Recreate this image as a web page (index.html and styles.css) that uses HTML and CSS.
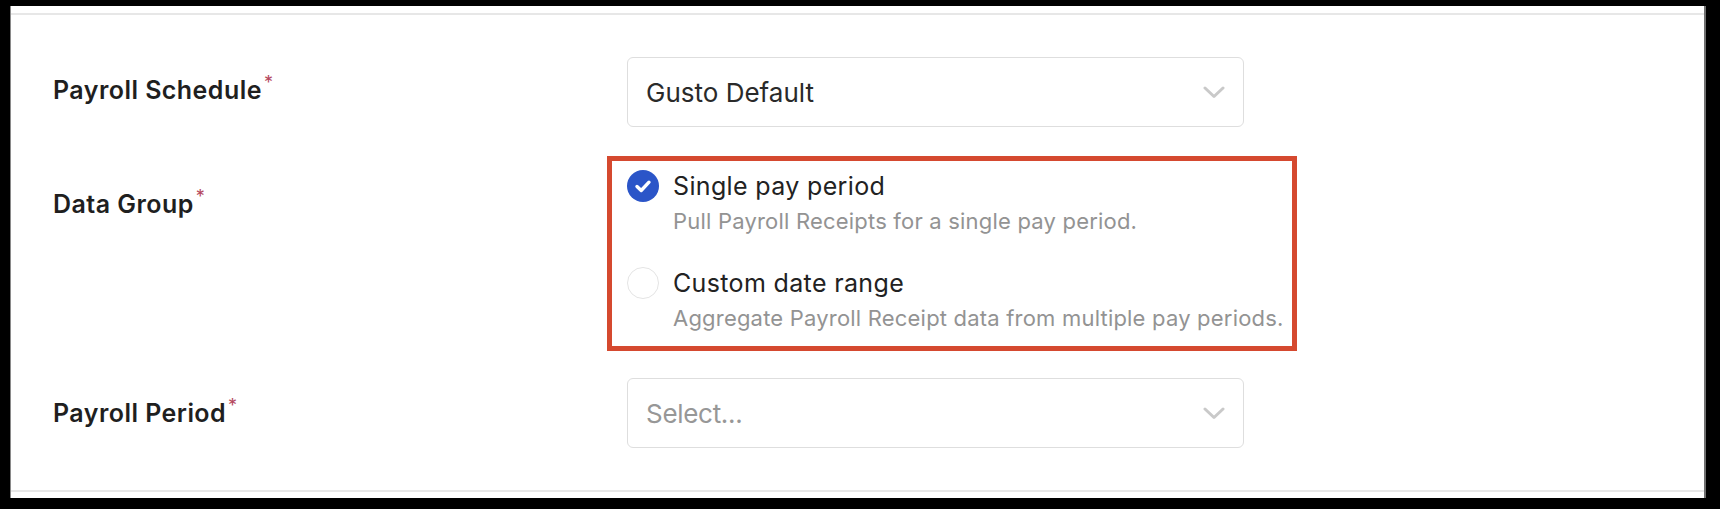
FILE: index.html
```html
<!DOCTYPE html>
<html lang="en">
<head>
<meta charset="utf-8">
<title>Payroll Receipts</title>
<link rel="stylesheet" href="styles.css">
</head>
<body>
<div class="panel">
  <div class="rule"></div>
  <form class="form">
    <div class="row row-center">
      <div class="label">Payroll Schedule<span class="req">*</span></div>
      <div class="control">
        <div class="select">
          <span class="select-value">Gusto Default</span>
          <svg class="chev" viewBox="0 0 22 13" width="22" height="13"><path d="M2 2 L11 10.5 L20 2" fill="none" stroke="#c9c9c9" stroke-width="3" stroke-linecap="round" stroke-linejoin="round"/></svg>
        </div>
      </div>
    </div>
    <div class="row row-top">
      <div class="label label-group">Data Group<span class="req">*</span></div>
      <div class="control">
        <div class="highlight">
          <div class="option">
            <svg class="radio" viewBox="0 0 32 32" width="32" height="32"><circle cx="16" cy="16" r="16" fill="#2b55c8"/><path d="M10 16.5 L14.2 20.5 L22 12.2" fill="none" stroke="#fff" stroke-width="3.4" stroke-linecap="round" stroke-linejoin="round"/></svg>
            <div class="option-text">
              <div class="option-title">Single pay period</div>
              <div class="option-desc">Pull Payroll Receipts for a single pay period.</div>
            </div>
          </div>
          <div class="option">
            <svg class="radio" viewBox="0 0 32 32" width="32" height="32"><circle cx="16" cy="16" r="15.5" fill="#fff" stroke="#e4e4e4" stroke-width="1"/></svg>
            <div class="option-text">
              <div class="option-title">Custom date range</div>
              <div class="option-desc">Aggregate Payroll Receipt data from multiple pay periods.</div>
            </div>
          </div>
        </div>
      </div>
    </div>
    <div class="row row-center">
      <div class="label label-last">Payroll Period<span class="req">*</span></div>
      <div class="control">
        <div class="select">
          <span class="select-placeholder">Select...</span>
          <svg class="chev" viewBox="0 0 22 13" width="22" height="13"><path d="M2 2 L11 10.5 L20 2" fill="none" stroke="#c9c9c9" stroke-width="3" stroke-linecap="round" stroke-linejoin="round"/></svg>
        </div>
      </div>
    </div>
  </form>
  <div class="rule"></div>
</div>
</body>
</html>
```
FILE: styles.css
```css
html, body {
  margin: 0;
  padding: 0;
  background: #000;
}
body {
  font-family: Inter, Lato, "Noto Sans", sans-serif;
  color: #222;
}
.panel {
  margin: 6px 14px 11px 10px;
  height: 492px;
  box-sizing: border-box;
  padding: 7px 0 6px;
  background: #fff;
  border-left: 1px solid #8a8a8a;
  border-right: 2px solid #6f6f6f;
  display: flex;
  flex-direction: column;
}
.rule {
  height: 2px;
  background: #e7e7e7;
}
.form {
  margin: 0;
  padding: 42px 0 42px 42px;
  display: flex;
  flex-direction: column;
  gap: 29px;
}
.form .row:last-child {
  margin-top: -2px;
}
.row {
  display: grid;
  grid-template-columns: 574px 1fr;
}
.row-center {
  align-items: center;
}
.row-top {
  align-items: start;
}
.label {
  font-size: 25px;
  font-weight: 600;
  line-height: 32px;
  letter-spacing: 0.45px;
  color: #1f1f1f;
  white-space: nowrap;
  margin-top: -4px;
}
.label-group {
  margin-top: 32px;
}
.label-last {
  margin-top: 0;
}
.req {
  font-size: 18px;
  font-weight: 400;
  color: #b5485d;
  vertical-align: 10px;
  line-height: 1;
  margin-left: 2px;
}
.select {
  width: 617px;
  height: 70px;
  box-sizing: border-box;
  border: 1px solid #dedede;
  border-radius: 6px;
  display: flex;
  align-items: center;
  justify-content: space-between;
  padding: 0 18px 0 18px;
  font-size: 26px;
}
.select-value {
  color: #2a2a2a;
}
.select-placeholder {
  color: #979797;
  letter-spacing: -0.3px;
}
.chev {
  display: block;
}
.highlight {
  display: inline-flex;
  flex-direction: column;
  gap: 31px;
  margin-left: -20px;
  border: 5px solid #d5492f;
  padding: 9px 8px 13px 15px;
}
.option {
  display: flex;
  align-items: flex-start;
  gap: 14px;
}
.radio {
  display: block;
  flex: none;
}
.option-title {
  font-size: 25px;
  line-height: 32px;
  letter-spacing: 0.35px;
  color: #222;
}
.option-desc {
  margin-top: 4px;
  font-size: 22px;
  line-height: 30px;
  letter-spacing: 0.2px;
  color: #939393;
}
```
